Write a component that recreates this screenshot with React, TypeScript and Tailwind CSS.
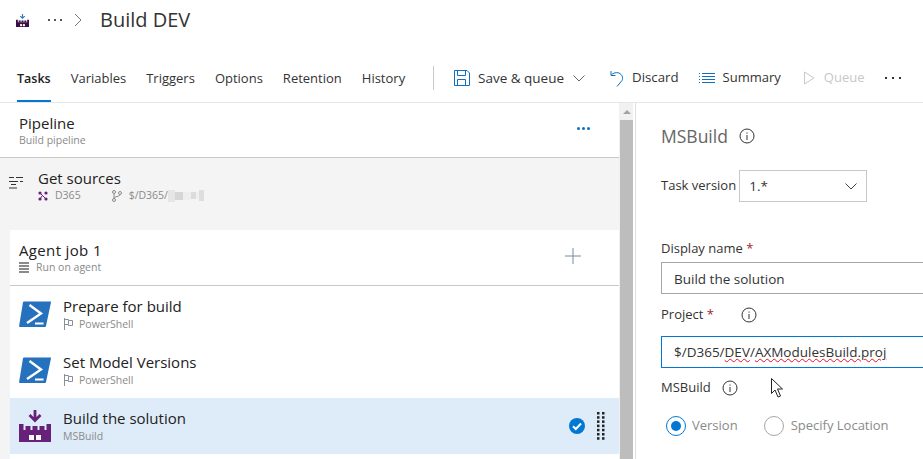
import React from "react";

const font = { fontFamily: '"Open Sans", "Noto Sans", sans-serif' };

function Info({ className = "" }: { className?: string }) {
  return (
    <svg width="16" height="16" viewBox="0 0 16 16" className={className} fill="none">
      <circle cx="8" cy="8" r="7" stroke="#333" strokeWidth="1" />
      <rect x="7.5" y="7" width="1" height="5" fill="#333" />
      <rect x="7.5" y="4.5" width="1" height="1.2" fill="#333" />
    </svg>
  );
}

function MSBuildIcon({ size = 32, bg = "#68217a", arrow = "#68217a", hole = "#fff" }: { size?: number; bg?: string; arrow?: string; hole?: string }) {
  return (
    <svg width={size} height={size} viewBox="0 0 32 32">
      <path d="M16 0v11M10.500 5 16 10.500 21.500 5" stroke={arrow} strokeWidth="2.800" fill="none" />
      <path d="M0 14h4.500v6h23v-6H32v18H0z" fill={bg} />
      <rect x="6.500" y="16" width="5" height="4.500" fill={bg} />
      <rect x="13.500" y="16" width="5" height="4.500" fill={bg} />
      <rect x="20.500" y="16" width="5" height="4.500" fill={bg} />
      <rect x="10" y="25" width="5" height="5" fill={hole} />
      <rect x="17" y="25" width="5" height="5" fill={hole} />
    </svg>
  );
}

function PowerShellIcon() {
  return (
    <svg width="32" height="26" viewBox="0 0 32 26">
      <path d="M5 0.500h26.500c.5 0 .6.300.5.800L27 25c-.1.500-.4 1-1 1H.8c-.6 0-.8-.4-.7-.9L4 1.200C4.100.700 4.500.500 5 .500z" fill="#2671be" />
      <path d="M10.500 4 22 12.500 8 22" stroke="#fff" strokeWidth="2.400" fill="none" />
      <rect x="16" y="21.500" width="8.500" height="2" fill="#fff" />
    </svg>
  );
}

function FlagIcon() {
  return (
    <svg width="11" height="12" viewBox="0 0 11 12" fill="none" stroke="#8a8f9c">
      <path d="M1.500 0v12M1.500 1.500h4v1h4v5h-4v-1h-4M5.500 2.500v4" />
    </svg>
  );
}

function Tab({ label, active }: { label: string; active?: boolean }) {
  return (
    <div className={`h-[37px] flex items-center border-b-2 ${active ? "border-[#0078d4] text-[#222] font-semibold" : "border-transparent text-[#333]"}`}>
      <span className={`-mt-[7px] ${active ? "text-[12.500px]" : "text-[13px]"}`}>{label}</span>
    </div>
  );
}

function Step({ title, sub, selected }: { title: string; sub: string; selected?: boolean }) {
  const isPs = sub === "PowerShell";
  return (
    <div className={`h-[56px] flex items-center ${selected ? "bg-[#deecf9]" : "bg-white"}`}>
      <div className="w-[32px] ml-[9px] flex justify-center shrink-0">
        {isPs ? <PowerShellIcon /> : <MSBuildIcon />}
      </div>
      <div className="ml-[12px] flex-1">
        <div className="text-[15px] leading-[19px] text-[#222]">{title}</div>
        <div className="mt-[1px] flex items-center gap-[5px] leading-[15px] text-[10.500px] text-[#8a8a8a]">
          {isPs && <FlagIcon />}
          <span>{sub}</span>
        </div>
      </div>
      {selected && (
        <>
          <svg width="18" height="18" viewBox="0 0 18 18" className="mr-[11px] -mt-[1px]">
            <circle cx="9" cy="9" r="8" fill="#0078d4" />
            <path d="M5 9.200 7.800 12 13 6.500" stroke="#fff" strokeWidth="2" fill="none" />
          </svg>
          <svg width="8" height="28" viewBox="0 0 8 28" className="mr-[14px]">
            {[0, 1, 2, 3, 4, 5, 6].map((r) => (
              <g key={r} fill="#222">
                <rect x="0" y={r * 4.2} width="2.500" height="2.500" />
                <rect x="5" y={r * 4.2} width="2.500" height="2.500" />
              </g>
            ))}
          </svg>
        </>
      )}
    </div>
  );
}

function Blurred() {
  return (
    <span className="inline-flex h-[12px] items-center">
      <span className="w-[7px] h-[12px] bg-[#e6e6e6]" />
      <span className="w-[8px] h-[8px] bg-[#d6d6d6]" />
      <span className="w-[8px] h-[8px] bg-[#eeeeee]" />
      <span className="w-[5px] h-[7px] bg-[#dcdcdc]" />
      <span className="w-[3px] h-[7px] bg-[#f0f0f0]" />
      <span className="w-[5px] h-[11px] bg-[#dedede]" />
    </span>
  );
}

export default function App() {
  return (
    <div className="w-[923px] h-[459px] overflow-hidden bg-white flex flex-col" style={font}>
      {/* breadcrumb */}
      <div className="h-[40px] shrink-0 flex items-center">
        <div className="ml-[16px] w-[13px] flex"><MSBuildIcon size={13} bg="#3a0d44" arrow="#2b7cc4" /></div>
        <span className="ml-[19px] flex gap-[4px]">
          {[0, 1, 2].map((i) => (
            <span key={i} className="w-[2px] h-[2px] bg-[#555]" />
          ))}
        </span>
        <svg width="8" height="14" viewBox="0 0 8 14" className="ml-[12px]" fill="none" stroke="#777">
          <path d="M1 1l6 6-6 6" />
        </svg>
        <span className="ml-[18px] text-[20px] text-[#333] leading-[26px]">Build DEV</span>
      </div>

      {/* toolbar */}
      <div className="h-[23px] shrink-0" />
      <div className="h-[40px] shrink-0 flex items-end border-b border-[#e6e6e6]">
        <div className="ml-[16px] w-[417px] pl-[1px] flex gap-[20px]">
          <Tab label="Tasks" active />
          <Tab label="Variables" />
          <Tab label="Triggers" />
          <Tab label="Options" />
          <Tab label="Retention" />
          <Tab label="History" />
        </div>
        <div className="self-start mt-[3px] w-px h-[24px] bg-[#c8c8c8]" />
        <div className="self-start h-[30px] flex items-center text-[13.500px] text-[#333]">
          <svg width="16" height="16" viewBox="0 0 16 16" className="ml-[20px]" fill="none" stroke="#106ebe">
            <path d="M.5.500h12.500l2.500 2.500v12.500H.5z" />
            <path d="M3.500.500v5h8v-5M3.500 15.500v-6h8v6" />
          </svg>
          <span className="ml-[8px]">Save &amp; queue</span>
          <svg width="12" height="7" viewBox="0 0 12 7" className="ml-[9px]" fill="none" stroke="#666">
            <path d="M.5.500 6 6 11.500.500" />
          </svg>
          <svg width="14" height="17" viewBox="0 0 14 17" className="ml-[25px]" fill="none" stroke="#106ebe">
            <path d="M1 1v4.500h4.500M1.200 5.200C3 3 6 2 9 3c3 1.500 4.500 4.500 3 7.500l-5 6" />
          </svg>
          <span className="ml-[8px] text-[13.250px]">Discard</span>
          <svg width="16" height="11" viewBox="0 0 16 11" className="ml-[20px]" stroke="#106ebe" strokeWidth="1">
            <path d="M3 .500h13M3 3.500h13M3 6.500h13M3 9.500h13M0 .500h1M0 3.500h1M0 6.500h1M0 9.500h1" />
          </svg>
          <span className="ml-[8px] text-[13px]">Summary</span>
          <svg width="11" height="14" viewBox="0 0 11 14" className="ml-[23px]" fill="none" stroke="#c8c8c8">
            <path d="M.5 1v12L10 7z" />
          </svg>
          <span className="ml-[9px] text-[13px] text-[#c8c8c8]">Queue</span>
          <span className="ml-[21px] flex gap-[5px]">
            {[0, 1, 2].map((i) => (
              <span key={i} className="w-[2px] h-[2px] bg-[#333]" />
            ))}
          </span>
        </div>
      </div>

      <div className="flex-1 flex min-h-0">
        {/* left list */}
        <div className="w-[619px] shrink-0 flex flex-col">
          <div className="h-[55px] shrink-0 flex items-center justify-between border-b border-[#c8c8c8]">
            <div className="ml-[19px]">
              <div className="text-[15px] leading-[19px] text-[#222]">Pipeline</div>
              <div className="text-[10.500px] leading-[14px] text-[#8a8a8a]">Build pipeline</div>
            </div>
            <span className="mr-[29px] -mt-[3px] flex gap-[2px]">
              {[0, 1, 2].map((i) => (
                <span key={i} className="w-[3px] h-[3px] rounded-full bg-[#106ebe]" />
              ))}
            </span>
          </div>

          <div className="flex-1 bg-[#f4f4f4] flex flex-col min-h-0">
            <div className="h-[72px] shrink-0 flex items-start">
              <svg width="15" height="12" viewBox="0 0 15 12" className="ml-[9px] mt-[19px]" stroke="#333" strokeWidth="1">
                <path d="M0 .500h5M7 .500h7M0 4.500h9M11 4.500h3M2 7.500h5M0 11h8" />
              </svg>
              <div className="ml-[14px] mt-[11px]">
                <div className="text-[15px] leading-[19px] text-[#222]">Get sources</div>
                <div className="flex items-center text-[10.500px] leading-[15px] text-[#8a8a8a]">
                  <svg width="10" height="10" viewBox="0 0 10 10" fill="#68217a">
                    <circle cx="2" cy="2" r="1.600" />
                    <circle cx="8" cy="2" r="1.600" />
                    <circle cx="8" cy="8" r="1.600" />
                    <circle cx="2" cy="8" r="1.600" />
                    <path d="M2 2 8 8M2 8l2-3" stroke="#68217a" />
                  </svg>
                  <span className="ml-[7px]">D365</span>
                  <svg width="10" height="12" viewBox="0 0 10 12" className="ml-[31px]" fill="none" stroke="#8a8a8a">
                    <circle cx="2" cy="2" r="1.500" />
                    <circle cx="2" cy="10" r="1.500" />
                    <circle cx="8" cy="3" r="1.500" />
                    <path d="M2 3.500v5M8 4.500C8 7 2 6 2 8.500" />
                  </svg>
                  <span className="ml-[7px]">$/D365/</span>
                  <Blurred />
                </div>
              </div>
            </div>

            <div className="ml-[10px] flex-1 flex flex-col bg-white min-h-0">
              <div className="h-[56px] shrink-0 flex items-center justify-between border-b border-[#c8c8c8]">
                <div className="ml-[9px]">
                  <div className="text-[15px] leading-[19px] text-[#222] tracking-[0.35px]">Agent job 1</div>
                  <div className="flex items-center text-[10.500px] leading-[14px] text-[#8a8a8a]">
                    <svg width="10" height="11" viewBox="0 0 10 11" fill="#8a8a8a">
                      <path d="M0 0h10v2H0zM0 3h10v2H0zM0 6h10v2H0zM0 9h10v2H0z" />
                    </svg>
                    <span className="ml-[7px]">Run on agent</span>
                  </div>
                </div>
                <svg width="16" height="16" viewBox="0 0 16 16" className="mr-[38px] -mt-[4px]" stroke="#7a8aa8">
                  <path d="M8 0v16M0 8h16" />
                </svg>
              </div>
              <Step title="Prepare for build" sub="PowerShell" />
              <Step title="Set Model Versions" sub="PowerShell" />
              <Step title="Build the solution" sub="MSBuild" selected />
            </div>
          </div>
        </div>

        {/* scrollbar */}
        <div className="w-[14px] shrink-0 bg-[#f1f1f1] flex flex-col items-center pl-[1px]">
          <div className="h-[17px] flex items-center">
            <div className="w-0 h-0 border-x-[4px] border-x-transparent border-b-[4px] border-b-[#a3a3a3]" />
          </div>
          <div className="flex-1 w-[13px] bg-[#bdbdbd]" />
        </div>
        <div className="w-[2px] shrink-0 bg-white" />
        <div className="w-px shrink-0 bg-[#e0e0e0]" />

        {/* right pane */}
        <div className="flex-1 min-w-0 overflow-hidden pl-[25px]">
          <div className="h-[54px] flex items-center gap-[11px] pt-[12px]">
            <span className="text-[17.500px] text-[#666]">MSBuild</span>
            <Info />
          </div>
          <div className="mt-[13px] flex items-center h-[32px]">
            <span className="text-[13px] text-[#333]">Task version</span>
            <div className="ml-[3px] w-[128px] h-[32px] border border-[#c8c8c8] flex items-center justify-between">
              <span className="ml-[9px] text-[13.500px] text-[#333]">1.*</span>
              <svg width="12" height="7" viewBox="0 0 12 7" className="mr-[9px]" fill="none" stroke="#444">
                <path d="M.5.500 6 6 11.500.500" />
              </svg>
            </div>
          </div>
          <div className="mt-[37px] text-[13px] leading-[18px] text-[#333]">
            Display name <span className="text-[#a4262c]">*</span>
          </div>
          <div className="mt-[5px] h-[32px] w-[300px] border border-[#a6a6a6] flex items-center pl-[12px] text-[13.500px] text-[#333]">
            <span className="mt-[2px]">Build the solution</span>
          </div>
          <div className="mt-[11px] flex items-center h-[20px] text-[13px] text-[#333]">
            <span>Project <span className="text-[#a4262c]">*</span></span>
            <Info className="ml-[27px]" />
          </div>
          <div className="mt-[11px] h-[32px] w-[300px] border border-[#0078d4] flex items-center pl-[12px] text-[13.500px] text-[#333]">
            <span>
              $/D365/
              <span className="underline decoration-wavy decoration-[#e81123] decoration-1">DEV</span>/
              <span className="underline decoration-wavy decoration-[#e81123] decoration-1">AXModulesBuild.proj</span>
            </span>
          </div>
          <div className="mt-[10px] flex items-center h-[20px] text-[13px] text-[#333] relative">
            <span>MSBuild</span>
            <Info className="ml-[11px]" />
            <svg width="13" height="20" viewBox="0 0 13 20" className="absolute left-[110px] top-[0px]" fill="#fff" stroke="#222">
              <path d="M.5.500v15l3.500-3.500 3 7 2.500-1-3-7h5z" />
            </svg>
          </div>
          <div className="mt-[18px] ml-[5px] flex items-center h-[20px] text-[13px] text-[#8a8a8a]">
            <span className="w-[20px] h-[20px] rounded-full border border-[#0078d4] flex items-center justify-center">
              <span className="w-[10px] h-[10px] rounded-full bg-[#0078d4]" />
            </span>
            <span className="ml-[6px]">Version</span>
            <span className="ml-[26px] w-[20px] h-[20px] rounded-full border border-[#a6a6a6]" />
            <span className="ml-[7px]">Specify Location</span>
          </div>
        </div>
      </div>
    </div>
  );
}
